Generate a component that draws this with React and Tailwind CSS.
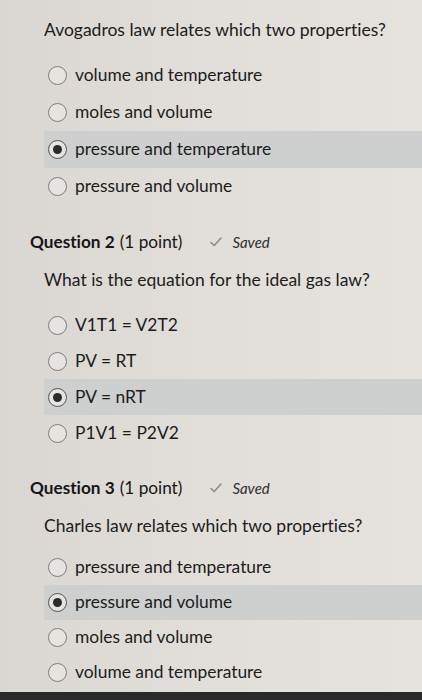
import React from "react";

const questions = [
  {
    header: null,
    text: "Avogadros law relates which two properties?",
    options: ["volume and temperature", "moles and volume", "pressure and temperature", "pressure and volume"],
    selected: 2,
    rowH: "h-[37px]",
    gap: "mt-[15px]",
  },
  {
    header: "Question 2",
    text: "What is the equation for the ideal gas law?",
    options: ["V1T1 = V2T2", "PV = RT", "PV = nRT", "P1V1 = P2V2"],
    selected: 2,
    rowH: "h-[36px]",
    gap: "mt-[15px]",
  },
  {
    header: "Question 3",
    text: "Charles law relates which two properties?",
    options: ["pressure and temperature", "pressure and volume", "moles and volume", "volume and temperature"],
    selected: 1,
    rowH: "h-[35px]",
    gap: "mt-[12px]",
  },
];

const Radio = ({ checked }) => (
  <span
    className={
      "flex h-[19px] w-[19px] shrink-0 items-center justify-center rounded-full border-[1.5px] bg-[#e6e4e0] " +
      (checked ? "border-[#555]" : "border-[#7d7d7d]")
    }
  >
    {checked && <span className="h-[9px] w-[9px] rounded-full bg-[#2b2b2b]" />}
  </span>
);

const Saved = () => (
  <span className="ml-[28px] flex items-center gap-[10px] text-[15px] italic text-[#2e2e2e]">
    <svg width="12" height="10" viewBox="0 0 12 10" fill="none">
      <path d="M1 5.5 L4.2 8.5 L11 1" stroke="#8c8c8c" strokeWidth="1.6" strokeLinecap="round" strokeLinejoin="round" />
    </svg>
    Saved
  </span>
);

const Question = ({ q }) => (
  <div className="flex flex-col">
    {q.header && (
      <div className="flex h-[24px] items-center pl-[30px] text-[17.2px] text-[#161616]">
        <span className="font-bold">{q.header}</span>
        <span className="ml-[5px]">(1 point)</span>
        <Saved />
      </div>
    )}
    <p className={"pl-[44px] text-[17.5px] leading-[24px] text-[#1c1c1c] " + (q.header ? "mt-[14px]" : "")}>
      {q.text}
    </p>
    <div className={"flex flex-col pl-[44px] " + q.gap}>
      {q.options.map((opt, i) => (
        <div
          key={opt}
          className={
            "flex items-center gap-[8px] pl-[4px] text-[17.4px] text-[#1c1c1c] " +
            q.rowH +
            (i === q.selected ? " bg-[#cdd0cf]" : "")
          }
        >
          <Radio checked={i === q.selected} />
          <span>{opt}</span>
        </div>
      ))}
    </div>
  </div>
);

export default function App() {
  return (
    <div
      className="relative h-[700px] w-[422px] overflow-hidden bg-gradient-to-r from-[#dad7d2] via-[#e2dfda] to-[#e6e3de] [font-variant-ligatures:none]"
      style={{ fontFamily: "Lato, 'Open Sans', sans-serif" }}
    >
      <div className="flex flex-col gap-[25px] pt-[18px]">
        {questions.map((q, i) => (
          <Question key={i} q={q} />
        ))}
      </div>
      <div className="absolute bottom-0 left-0 h-[8px] w-full bg-[#2a2a2c]" />
    </div>
  );
}
